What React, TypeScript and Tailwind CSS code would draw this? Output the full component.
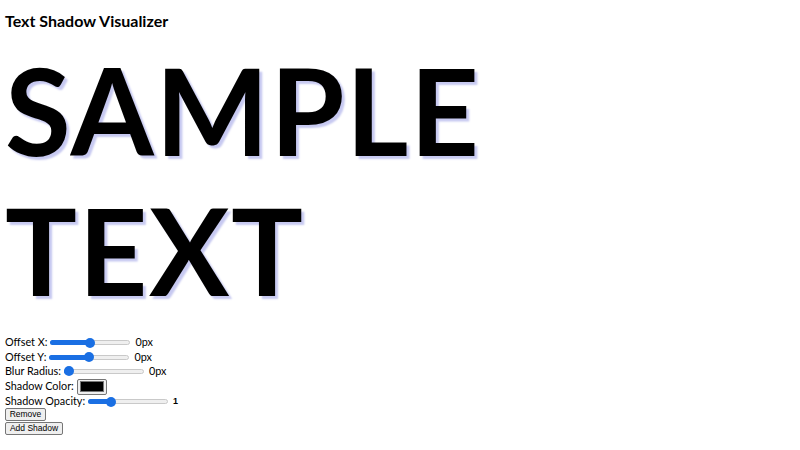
import React from "react";

type SliderProps = { width: number; fraction: number };

// Compact range control: blue filled part, light track, round thumb
function Slider({ width, fraction }: SliderProps) {
  const thumb = 10;
  const center = thumb / 2 + (width - thumb) * fraction;
  return (
    <div className="relative h-[10px] shrink-0" style={{ width }}>
      <div className="absolute left-0 right-0 top-[2.5px] h-[5px] rounded-full border border-[#c9c9c9] bg-[#efefef]" />
      <div
        className="absolute left-0 top-[2.5px] h-[5px] rounded-full bg-[#1a6fe3]"
        style={{ width: center }}
      />
      <div
        className="absolute top-0 h-[10px] w-[10px] rounded-full bg-[#1a6fe3]"
        style={{ left: center - thumb / 2 }}
      />
    </div>
  );
}

function Row({ children, className }: { children: React.ReactNode; className: string }) {
  return <div className={`flex items-center ${className}`}>{children}</div>;
}

export default function App() {
  return (
    <div className="min-h-[450px] w-[800px] bg-white px-[5px] pt-[11px] text-black [font-family:Lato,'Open_Sans',sans-serif]">
      <div className="text-[16px] font-bold leading-[20px]">Text Shadow Visualizer</div>

      <div className="mt-[9px] text-[120px] font-bold leading-[140px] tracking-[1.5px] [text-shadow:3px_3px_2px_#c7c9f1]">
        <div>SAMPLE</div>
        <div>TEXT</div>
      </div>

      <div className="mt-[15px] text-[10.8px] leading-none">
        <Row className="h-[15px]">
          <span>Offset X:</span>
          <span className="ml-[3px]"><Slider width={80} fraction={0.5} /></span>
          <span className="ml-[5px]">0px</span>
        </Row>
        <Row className="h-[14px]">
          <span>Offset Y:</span>
          <span className="ml-[3px]"><Slider width={80} fraction={0.5} /></span>
          <span className="ml-[5px]">0px</span>
        </Row>
        <Row className="h-[14px]">
          <span>Blur Radius:</span>
          <span className="ml-[3px]"><Slider width={80} fraction={0} /></span>
          <span className="ml-[5px]">0px</span>
        </Row>
        <Row className="h-[17px]">
          <span>Shadow Color:</span>
          <span className="ml-[3px] flex h-[16px] w-[30px] items-center justify-center rounded-[2px] border border-[#767676] bg-[#efefef]">
            <span className="h-[11px] w-[24px] border border-[#777] bg-black" />
          </span>
        </Row>
        <Row className="h-[13px]">
          <span>Shadow Opacity:</span>
          <span className="ml-[3px]"><Slider width={80} fraction={0.26} /></span>
          <span className="ml-[5px] text-[9px] font-bold [font-family:'Liberation_Sans',Arial,sans-serif]">1</span>
        </Row>
        <div className="flex flex-col items-start gap-[1px] [font-family:'Liberation_Sans',Arial,sans-serif]">
          <button className="h-[13px] w-[41px] rounded-[2px] border border-[#767676] bg-[#efefef] text-[8.5px] leading-none text-black">
            Remove
          </button>
          <button className="h-[13px] w-[58px] rounded-[2px] border border-[#767676] bg-[#efefef] text-[8.5px] leading-none text-black">
            Add Shadow
          </button>
        </div>
      </div>
    </div>
  );
}
